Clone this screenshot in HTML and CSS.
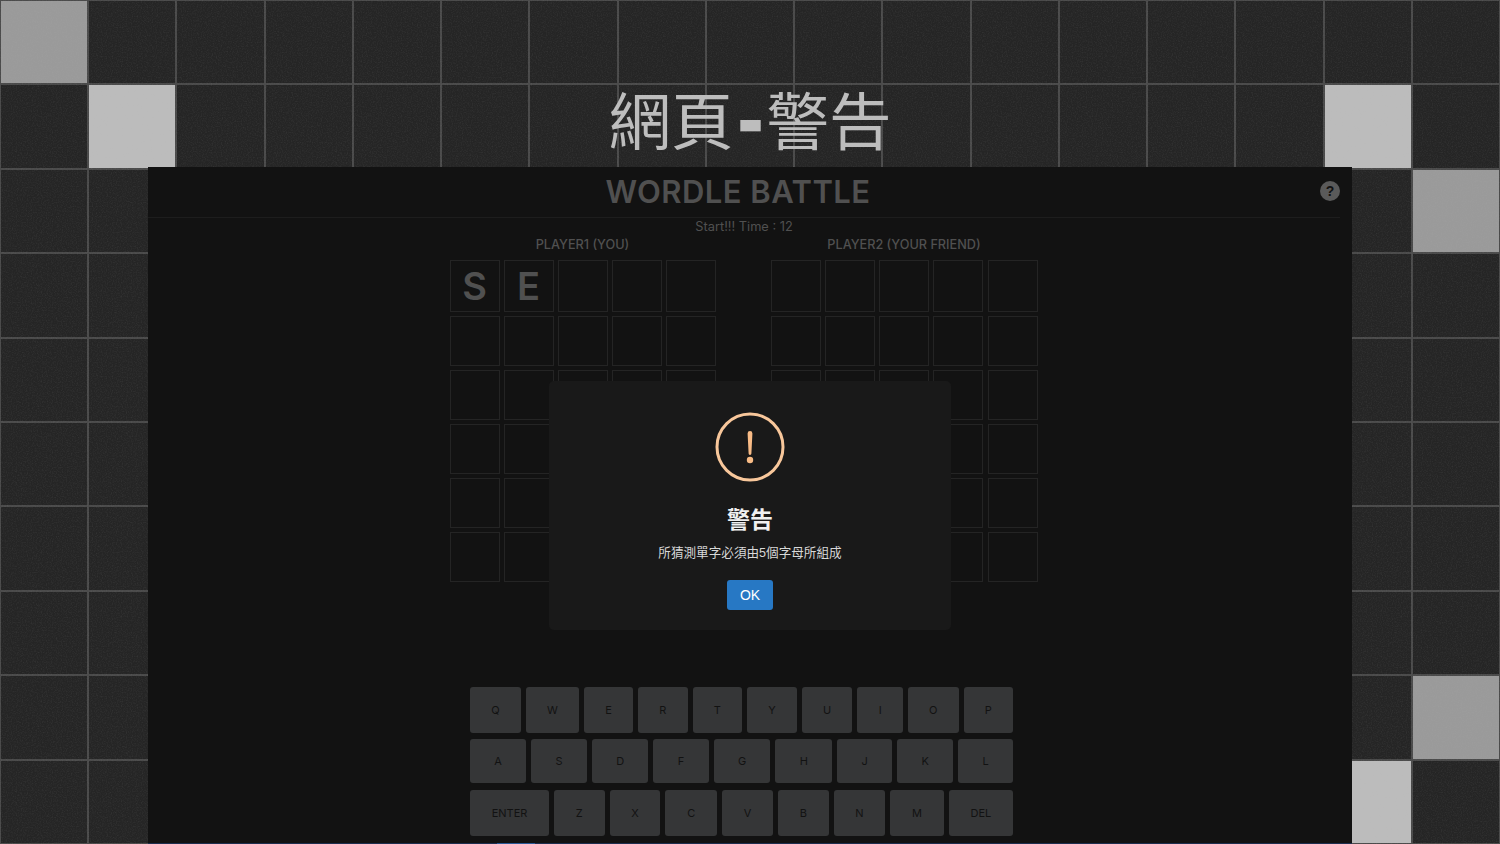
FILE: index.html
```html
<!DOCTYPE html>
<html lang="zh-Hant">
<head>
<meta charset="utf-8">
<title>網頁-警告</title>
<link rel="stylesheet" href="styles.css">
</head>
<body>
<div class="slide">
  <div class="tiles">
    <i class="t l1"></i><i class="t"></i><i class="t"></i><i class="t"></i><i class="t"></i><i class="t"></i><i class="t"></i><i class="t"></i><i class="t"></i><i class="t"></i><i class="t"></i><i class="t"></i><i class="t"></i><i class="t"></i><i class="t"></i><i class="t"></i><i class="t"></i>
    <i class="t"></i><i class="t l2"></i><i class="t"></i><i class="t"></i><i class="t"></i><i class="t"></i><i class="t"></i><i class="t"></i><i class="t"></i><i class="t"></i><i class="t"></i><i class="t"></i><i class="t"></i><i class="t"></i><i class="t"></i><i class="t l2"></i><i class="t"></i>
    <i class="t"></i><i class="t"></i><i class="t"></i><i class="t"></i><i class="t"></i><i class="t"></i><i class="t"></i><i class="t"></i><i class="t"></i><i class="t"></i><i class="t"></i><i class="t"></i><i class="t"></i><i class="t"></i><i class="t"></i><i class="t"></i><i class="t l1"></i>
    <i class="t"></i><i class="t"></i><i class="t"></i><i class="t"></i><i class="t"></i><i class="t"></i><i class="t"></i><i class="t"></i><i class="t"></i><i class="t"></i><i class="t"></i><i class="t"></i><i class="t"></i><i class="t"></i><i class="t"></i><i class="t"></i><i class="t"></i>
    <i class="t"></i><i class="t"></i><i class="t"></i><i class="t"></i><i class="t"></i><i class="t"></i><i class="t"></i><i class="t"></i><i class="t"></i><i class="t"></i><i class="t"></i><i class="t"></i><i class="t"></i><i class="t"></i><i class="t"></i><i class="t"></i><i class="t"></i>
    <i class="t"></i><i class="t"></i><i class="t"></i><i class="t"></i><i class="t"></i><i class="t"></i><i class="t"></i><i class="t"></i><i class="t"></i><i class="t"></i><i class="t"></i><i class="t"></i><i class="t"></i><i class="t"></i><i class="t"></i><i class="t"></i><i class="t"></i>
    <i class="t"></i><i class="t"></i><i class="t"></i><i class="t"></i><i class="t"></i><i class="t"></i><i class="t"></i><i class="t"></i><i class="t"></i><i class="t"></i><i class="t"></i><i class="t"></i><i class="t"></i><i class="t"></i><i class="t"></i><i class="t"></i><i class="t"></i>
    <i class="t"></i><i class="t"></i><i class="t"></i><i class="t"></i><i class="t"></i><i class="t"></i><i class="t"></i><i class="t"></i><i class="t"></i><i class="t"></i><i class="t"></i><i class="t"></i><i class="t"></i><i class="t"></i><i class="t"></i><i class="t"></i><i class="t"></i>
    <i class="t"></i><i class="t"></i><i class="t"></i><i class="t"></i><i class="t"></i><i class="t"></i><i class="t"></i><i class="t"></i><i class="t"></i><i class="t"></i><i class="t"></i><i class="t"></i><i class="t"></i><i class="t"></i><i class="t"></i><i class="t"></i><i class="t l1"></i>
    <i class="t"></i><i class="t"></i><i class="t"></i><i class="t"></i><i class="t"></i><i class="t"></i><i class="t"></i><i class="t"></i><i class="t"></i><i class="t"></i><i class="t"></i><i class="t"></i><i class="t"></i><i class="t"></i><i class="t"></i><i class="t l2"></i><i class="t"></i>
  </div>
  <svg class="noise" aria-hidden="true" width="1500" height="844">
    <filter id="grain"><feTurbulence type="fractalNoise" baseFrequency="0.8" numOctaves="2" seed="4"/><feColorMatrix type="matrix" values="0 0 0 0 0.5  0 0 0 0 0.5  0 0 0 0 0.5  1.2 0 0 0 -0.5"/></filter>
    <rect width="1500" height="844" filter="url(#grain)"/>
  </svg>

  <div class="content">
    <h1 class="slide-title">網頁<span class="dash">-</span>警告</h1>
    <main class="app">
      <div class="app-inner">
        <header class="app-head">
          <div class="logo">WORDLE BATTLE</div>
          <span class="help">?</span>
        </header>
        <div class="timer">Start!!! Time : 12</div>
        <div class="players">
          <section class="player">
            <div class="player-name">PLAYER1 (YOU)</div>
            <div class="board">
              <div class="row"><b class="cell">S</b><b class="cell">E</b><b class="cell"></b><b class="cell"></b><b class="cell"></b></div>
              <div class="row"><b class="cell"></b><b class="cell"></b><b class="cell"></b><b class="cell"></b><b class="cell"></b></div>
              <div class="row"><b class="cell"></b><b class="cell"></b><b class="cell"></b><b class="cell"></b><b class="cell"></b></div>
              <div class="row"><b class="cell"></b><b class="cell"></b><b class="cell"></b><b class="cell"></b><b class="cell"></b></div>
              <div class="row"><b class="cell"></b><b class="cell"></b><b class="cell"></b><b class="cell"></b><b class="cell"></b></div>
              <div class="row"><b class="cell"></b><b class="cell"></b><b class="cell"></b><b class="cell"></b><b class="cell"></b></div>
            </div>
          </section>
          <section class="player">
            <div class="player-name">PLAYER2 (YOUR FRIEND)</div>
            <div class="board">
              <div class="row"><b class="cell"></b><b class="cell"></b><b class="cell"></b><b class="cell"></b><b class="cell"></b></div>
              <div class="row"><b class="cell"></b><b class="cell"></b><b class="cell"></b><b class="cell"></b><b class="cell"></b></div>
              <div class="row"><b class="cell"></b><b class="cell"></b><b class="cell"></b><b class="cell"></b><b class="cell"></b></div>
              <div class="row"><b class="cell"></b><b class="cell"></b><b class="cell"></b><b class="cell"></b><b class="cell"></b></div>
              <div class="row"><b class="cell"></b><b class="cell"></b><b class="cell"></b><b class="cell"></b><b class="cell"></b></div>
              <div class="row"><b class="cell"></b><b class="cell"></b><b class="cell"></b><b class="cell"></b><b class="cell"></b></div>
            </div>
          </section>
        </div>
        <div class="keyboard">
          <div class="keys k1"><span class="key">Q</span><span class="key">W</span><span class="key">E</span><span class="key">R</span><span class="key">T</span><span class="key">Y</span><span class="key">U</span><span class="key">I</span><span class="key">O</span><span class="key">P</span></div>
          <div class="keys k2"><span class="key">A</span><span class="key">S</span><span class="key">D</span><span class="key">F</span><span class="key">G</span><span class="key">H</span><span class="key">J</span><span class="key">K</span><span class="key">L</span></div>
          <div class="keys k3"><span class="key">ENTER</span><span class="key">Z</span><span class="key">X</span><span class="key">C</span><span class="key">V</span><span class="key">B</span><span class="key">N</span><span class="key">M</span><span class="key">DEL</span></div>
        </div>
      </div>
      <div class="app-edge"><i class="app-edge-mark"></i></div>
      <div class="alert" role="alertdialog">
        <svg class="alert-icon" width="70" height="70" viewBox="0 0 70 70" aria-hidden="true">
          <circle cx="35" cy="35" r="33" fill="none" stroke="#f8c79b" stroke-width="3"/>
          <path d="M32.6 21.4a2.4 2.4 0 0 1 4.8 0L36.4 41.6a1.4 1.4 0 0 1-2.8 0Z" fill="#f8bb86"/>
          <circle cx="35" cy="48" r="3.2" fill="#f8bb86"/>
        </svg>
        <div class="alert-title">警告</div>
        <div class="alert-text">所猜測單字必須由5個字母所組成</div>
        <button class="alert-ok">OK</button>
      </div>
    </main>
  </div>
</div>
</body>
</html>
```

FILE: styles.css
```css
* { box-sizing: border-box; }
html, body { margin: 0; height: 100%; background: #2a2a2a; overflow: hidden; }
.slide {
  position: relative;
  width: 1500px;
  height: 844px;
  overflow: hidden;
  font-family: "Inter", "Noto Sans", "Noto Sans CJK TC", sans-serif;
}
.tiles {
  position: absolute;
  inset: 0;
  display: grid;
  grid-template-columns: repeat(17, 1fr);
  grid-template-rows: repeat(10, 1fr);
  background: #4a4a4a;
}
.t { display: block; margin: 1px; background: #252525; }
.t.l1 { background: #9a9a9a; }
.t.l2 { background: #bcbcbc; }
.noise { position: absolute; inset: 0; opacity: .16; }
.content {
  position: relative;
  height: 844px;
  display: flex;
  flex-direction: column;
  align-items: center;
}
.slide-title {
  margin: 0;
  height: 167px;
  padding-top: 74px;
  font: 400 62.5px/88px "Noto Sans CJK TC", sans-serif;
  color: #bdbdbd;
  white-space: nowrap;
}
.dash {
  display: inline-block;
  width: 33px;
  line-height: 40px;
  text-align: center;
  font-weight: 900;
  transform: translateY(-5px) scale(1.15, 1.45);
}
.app {
  position: relative;
  width: 1204px;
  flex: 1;
  background: #121212;
  overflow: hidden;
}
.app-inner { width: 1192px; display: flex; flex-direction: column; align-items: center; }
.app-head {
  position: relative;
  width: 100%;
  height: 51px;
  border-bottom: 1px solid #1d1d1d;
  text-align: center;
}
.logo {
  margin-right: 12px;
  font-size: 31px;
  line-height: 50px;
  font-weight: 600;
  letter-spacing: .45px;
  color: #505050;
  white-space: nowrap;
}
.help {
  position: absolute;
  top: 14px;
  right: 0;
  width: 20px;
  height: 20px;
  border-radius: 50%;
  background: #5a5a5a;
  color: #121212;
  font: 700 14px/20px "Liberation Sans", sans-serif;
  text-align: center;
}
.timer {
  font-size: 12.8px;
  line-height: 18px;
  color: #505050;
}
.players { display: flex; gap: 55px; margin-right: 1px; }
.player { width: 266px; display: flex; flex-direction: column; align-items: center; }
.player:last-child { width: 267px; }
.player-name {
  font-size: 12.7px;
  font-weight: 500;
  line-height: 17px;
  color: #505050;
  white-space: nowrap;
}
.board { margin-top: 7px; display: flex; flex-direction: column; gap: 4px; width: 100%; }
.row { display: flex; justify-content: space-between; }
.cell {
  display: flex;
  align-items: center;
  justify-content: center;
  width: 50px;
  height: 50px;
  border: 1px solid #242424;
  font-size: 38px;
  font-weight: 600;
  line-height: 50px;
  color: #505050;
}
.row:first-child .cell { height: 52px; }
.keyboard {
  width: 543px;
  margin-top: 105px;
  margin-right: 5px;
  display: flex;
  flex-direction: column;
  gap: 6px;
}
.keys { display: flex; gap: 5px; }
.key {
  flex: 1 1 auto;
  height: 46px;
  display: flex;
  align-items: center;
  justify-content: center;
  border-radius: 3px;
  background: #353637;
  color: #121212;
  font-size: 11px;
  line-height: 46px;
}
.k2 .key { height: 44px; }
.k3 { margin-top: 1px; }
.app-edge {
  position: absolute;
  left: 0;
  right: 0;
  bottom: 0;
  height: 1px;
  background: #1d2f4f;
}
.app-edge-mark {
  position: absolute;
  left: 349px;
  top: 0;
  width: 38px;
  height: 1px;
  background: #2a5a98;
}
.alert {
  position: absolute;
  left: 401px;
  top: 214px;
  width: 402px;
  height: 249px;
  border-radius: 5px;
  background: #191919;
  display: flex;
  flex-direction: column;
  align-items: center;
  padding-top: 31px;
  font-family: "Liberation Sans", "Noto Sans CJK TC", sans-serif;
}
.alert-icon { display: block; }
.alert-title {
  margin-top: 20px;
  font: 700 23px/32px "Noto Sans CJK TC", sans-serif;
  color: #f0f0f0;
}
.alert-text {
  margin-top: 9px;
  font-size: 12.6px;
  line-height: 20px;
  color: #d8d8d8;
}
.alert-ok {
  margin-top: 17px;
  width: 46px;
  height: 30px;
  padding: 0;
  border: 0;
  border-radius: 3px;
  background: #2778c4;
  color: #fff;
  font: 400 14px/30px "Liberation Sans", sans-serif;
}
```
